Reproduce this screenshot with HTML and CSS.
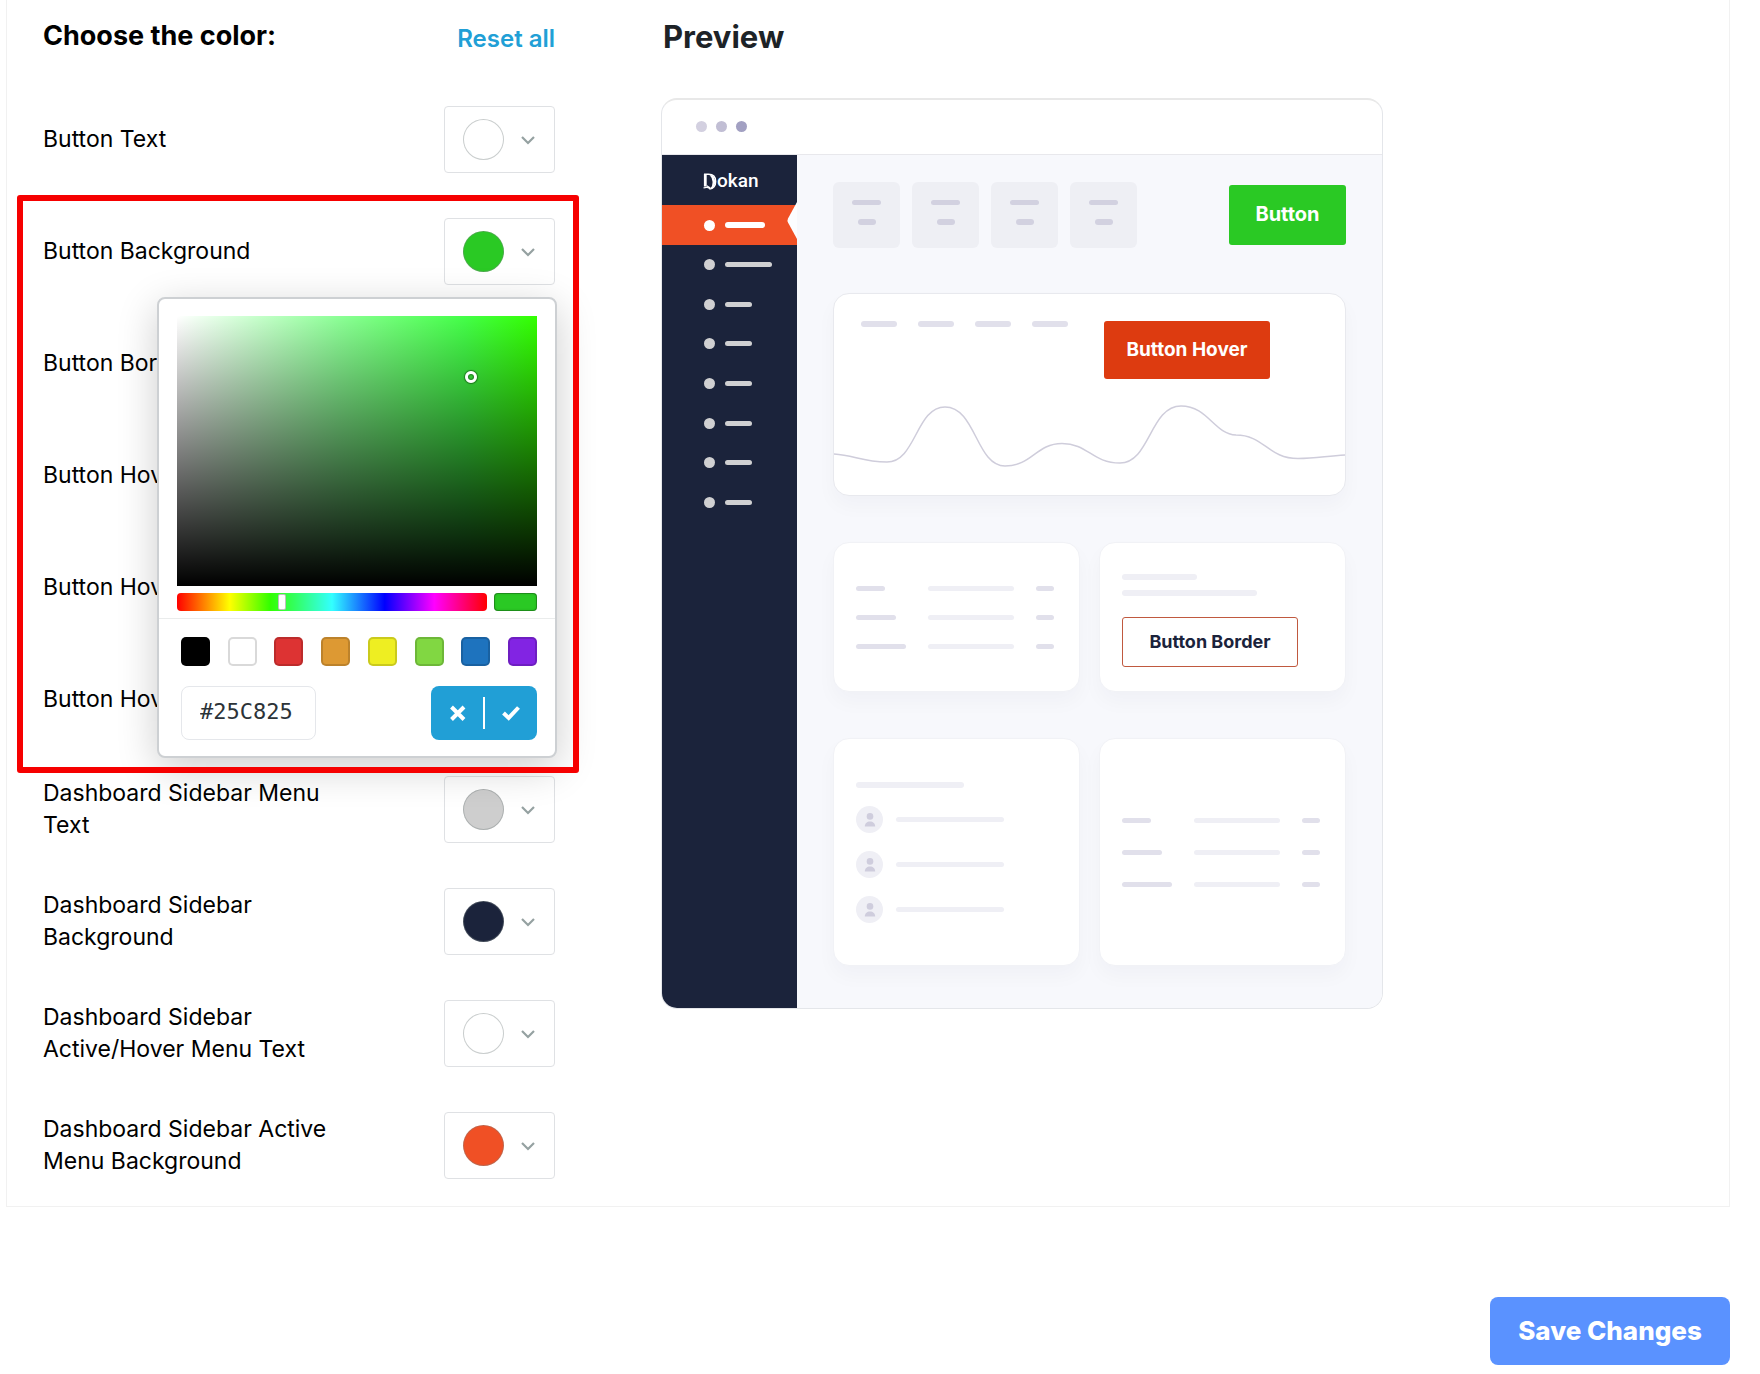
FILE: index.html
```html
<!DOCTYPE html>
<html lang="en">
<head>
<meta charset="utf-8">
<meta name="viewport" content="width=device-width, initial-scale=1">
<title>Color settings</title>
<link rel="stylesheet" href="styles.css">
</head>
<body>
<svg class="defs" width="0" height="0" aria-hidden="true">
  <symbol id="chevron" viewBox="0 0 16 10"><path d="M2 2l6 6 6-6" fill="none" stroke="currentColor" stroke-width="2.2"/></symbol>
  <symbol id="person" viewBox="0 0 12 14"><circle cx="6" cy="3.4" r="3.3"/><path d="M.8 13.6C.8 10.6 3 8.6 6 8.6s5.200 2 5.200 5z"/></symbol>
</svg>
<form class="page">
  <main class="panel">
    <section class="settings">
      <header class="settings-head">
        <h2 class="settings-title">Choose the color:</h2>
        <a class="reset" href="#">Reset all</a>
      </header>

      <div class="groups">
        <div class="group">
          <div class="row">
            <span class="row-label" id="l1">Button Text</span>
            <button type="button" class="chip" aria-labelledby="l1"><span class="dot white"></span><svg class="chevron"><use href="#chevron"/></svg></button>
          </div>
          <div class="row row-open">
            <span class="row-label" id="l2">Button Background</span>
            <button type="button" class="chip" aria-labelledby="l2"><span class="dot green"></span><svg class="chevron"><use href="#chevron"/></svg></button>
            <div class="picker">
              <div class="picker-top">
                <div class="shade"><span class="shade-handle"></span></div>
                <div class="hue-line">
                  <input class="hue" type="range" min="0" max="360" value="120" aria-label="Hue">
                  <span class="current"></span>
                </div>
              </div>
              <div class="picker-bottom">
                <div class="swatches">
                  <button type="button" class="swatch black" aria-label="Black"></button>
                  <button type="button" class="swatch white" aria-label="White"></button>
                  <button type="button" class="swatch red" aria-label="Red"></button>
                  <button type="button" class="swatch amber" aria-label="Orange"></button>
                  <button type="button" class="swatch yellow" aria-label="Yellow"></button>
                  <button type="button" class="swatch lime" aria-label="Lime"></button>
                  <button type="button" class="swatch blue" aria-label="Blue"></button>
                  <button type="button" class="swatch purple" aria-label="Purple"></button>
                </div>
                <div class="picker-foot">
                  <input class="hex" type="text" value="#25C825" aria-label="Hex value">
                  <div class="actions">
                    <button type="button" class="action" aria-label="Cancel"><svg width="20" height="20" viewBox="0 0 20 20"><path d="M4.500 4l12.500 12.500M17 4L4.500 16.500" stroke="#fff" stroke-width="4"/></svg></button>
                    <button type="button" class="action" aria-label="Apply"><svg width="20" height="20" viewBox="0 0 20 20"><path d="M2.500 10l5.200 5L17.500 4.500" fill="none" stroke="#fff" stroke-width="4"/></svg></button>
                  </div>
                </div>
              </div>
            </div>
          </div>
          <div class="row">
            <span class="row-label" id="l3">Button Border</span>
            <button type="button" class="chip" aria-labelledby="l3"><span class="dot orange"></span><svg class="chevron"><use href="#chevron"/></svg></button>
          </div>
          <div class="row">
            <span class="row-label" id="l4">Button Hover</span>
            <button type="button" class="chip" aria-labelledby="l4"><span class="dot orange"></span><svg class="chevron"><use href="#chevron"/></svg></button>
          </div>
          <div class="row">
            <span class="row-label" id="l5">Button Hover Text</span>
            <button type="button" class="chip" aria-labelledby="l5"><span class="dot white"></span><svg class="chevron"><use href="#chevron"/></svg></button>
          </div>
          <div class="row">
            <span class="row-label" id="l6">Button Hover Border</span>
            <button type="button" class="chip" aria-labelledby="l6"><span class="dot orange"></span><svg class="chevron"><use href="#chevron"/></svg></button>
          </div>
        </div>
        <div class="group">
          <div class="row">
            <span class="row-label" id="l7">Dashboard Sidebar Menu Text</span>
            <button type="button" class="chip" aria-labelledby="l7"><span class="dot gray"></span><svg class="chevron"><use href="#chevron"/></svg></button>
          </div>
          <div class="row">
            <span class="row-label" id="l8">Dashboard Sidebar Background</span>
            <button type="button" class="chip" aria-labelledby="l8"><span class="dot navy"></span><svg class="chevron"><use href="#chevron"/></svg></button>
          </div>
          <div class="row">
            <span class="row-label" id="l9">Dashboard Sidebar Active/Hover Menu Text</span>
            <button type="button" class="chip" aria-labelledby="l9"><span class="dot white"></span><svg class="chevron"><use href="#chevron"/></svg></button>
          </div>
          <div class="row">
            <span class="row-label" id="l10">Dashboard Sidebar Active Menu Background</span>
            <button type="button" class="chip" aria-labelledby="l10"><span class="dot orange"></span><svg class="chevron"><use href="#chevron"/></svg></button>
          </div>
        </div>
        <div class="highlight"></div>
      </div>
    </section>

    <section class="preview">
      <h2 class="preview-title">Preview</h2>
      <div class="window">
        <div class="window-bar"><i></i><i></i><i></i></div>
        <div class="window-body">
          <aside class="side">
            <div class="logo">
              <svg width="14" height="17" viewBox="0 0 14 17"><path d="M2.300 1v12.500" stroke="#fff" stroke-width="2.800" fill="none"/><path d="M1 1.300h4.500c4.500 0 7.200 2.600 7.200 7.200 0 4.300-2.400 7.500-6 7.500" stroke="#fff" stroke-width="1.400" fill="none"/><path d="M7.500 2.300c5 1.500 5.500 10.500.5 13.200 3-3 3-10-.5-13.200z" fill="#fff" stroke="#fff" stroke-width="1.200"/><path d="M.5 15c3-1 5-.8 6.500 1M3.800 12.800l3.500 2.200" stroke="#fff" stroke-width="1.300" fill="none"/></svg><span>okan</span>
            </div>
            <div class="menu-item active"><b></b><i></i><svg class="notch" width="10" height="37" viewBox="0 0 10 37"><path d="M10 0v37L1 20.500q-1-2 0-4z" fill="#fcfdff"/></svg></div>
            <div class="menu">
              <div class="menu-item long"><b></b><i></i></div>
              <div class="menu-item"><b></b><i></i></div>
              <div class="menu-item"><b></b><i></i></div>
              <div class="menu-item"><b></b><i></i></div>
              <div class="menu-item"><b></b><i></i></div>
              <div class="menu-item"><b></b><i></i></div>
              <div class="menu-item"><b></b><i></i></div>
            </div>
          </aside>
          <div class="content">
            <div class="stats">
              <div class="tile"><i></i><i></i></div>
              <div class="tile"><i></i><i></i></div>
              <div class="tile"><i></i><i></i></div>
              <div class="tile"><i></i><i></i></div>
              <button type="button" class="demo demo-main">Button</button>
            </div>
            <div class="card chart">
              <div class="chart-head">
                <div class="tabs"><i></i><i></i><i></i><i></i></div>
                <button type="button" class="demo demo-hover">Button Hover</button>
              </div>
              <svg class="curve" viewBox="0 0 511 64" preserveAspectRatio="none"><path d="M0 49C20 50 28 57 53 57C82 57 82 2 111 2C142 2 142 61 171 61C198 61 202 38.500 228 38.500C254 38.500 258 58 286 58C316 58 316 1 347 1C374 1 380 29 402 30C430 30 434 53.500 464 53.500C482 53.500 492 51 511 50" fill="none" stroke="#cfcddb" stroke-width="1.500"/></svg>
            </div>
            <div class="cards">
              <div class="card lines">
                <i></i><i></i><i></i>
                <i class="mid"></i><i></i><i></i>
                <i class="full"></i><i></i><i></i>
              </div>
              <div class="card bordered">
                <i class="bar short"></i>
                <i class="bar long"></i>
                <button type="button" class="demo demo-border">Button Border</button>
              </div>
            </div>
            <div class="cards">
              <div class="card people">
                <i class="bar"></i>
                <div class="person"><span><svg width="12" height="14"><use href="#person"/></svg></span><i></i></div>
                <div class="person"><span><svg width="12" height="14"><use href="#person"/></svg></span><i></i></div>
                <div class="person"><span><svg width="12" height="14"><use href="#person"/></svg></span><i></i></div>
              </div>
              <div class="card lines spaced">
                <i></i><i></i><i></i>
                <i class="mid"></i><i></i><i></i>
                <i class="full"></i><i></i><i></i>
              </div>
            </div>
          </div>
        </div>
      </div>
    </section>
  </main>
  <footer class="foot"><button type="submit" class="save">Save Changes</button></footer>
</form>
</body>
</html>
```
FILE: styles.css
```css
* { box-sizing: border-box; }
body {
  margin: 0;
  background: #fff;
  color: #000;
  font-family: Inter, "Liberation Sans", sans-serif;
}
h2 { margin: 0; }
button, input { font-family: inherit; margin: 0; padding: 0; }
button { cursor: pointer; }
i, b { display: block; }
.defs { position: absolute; }

.page { padding: 0 30px 9px 6px; }
.panel {
  display: grid;
  grid-template-columns: 512px minmax(0, 722px);
  gap: 106px;
  align-items: start;
  padding: 0 0 27px 36px;
  border: 1px solid #f1f1f1;
  border-top: 0;
}

/* Color list */
.settings-head {
  display: flex;
  justify-content: space-between;
  align-items: flex-start;
  height: 106px;
  padding-top: 20px;
}
.settings-title { font-size: 27px; line-height: 32px; font-weight: 700; }
.reset {
  padding-top: 3px;
  font-size: 24px;
  line-height: 32px;
  font-weight: 600;
  color: #219fd6;
  text-decoration: none;
}
.groups { position: relative; display: grid; gap: 43px; }
.group { display: grid; gap: 45px; }
.row {
  display: flex;
  justify-content: space-between;
  align-items: center;
  height: 67px;
}
.row-open { position: relative; z-index: 1; }
.row-label { max-width: 310px; padding-bottom: 1px; font-size: 23px; line-height: 32px; }
.chip {
  display: flex;
  align-items: center;
  gap: 16px;
  width: 111px;
  height: 67px;
  padding-left: 18px;
  background: none;
  border: 1px solid #dfe1e4;
  border-radius: 4px;
}
.chevron { width: 16px; height: 10px; color: #95a1a1; }
.dot {
  width: 41px;
  height: 41px;
  border: 1px solid rgba(120, 130, 130, .4);
  border-radius: 50%;
}
.white { background: #fff; }
.green { background: #2ac924; }
.orange { background: #f05025; }
.gray { background: #cecece; }
.navy { background: #1b233b; }

.highlight {
  position: absolute;
  z-index: 2;
  top: 89px;
  left: -26px;
  right: -24px;
  height: 578px;
  border: 6px solid #f60000;
  border-radius: 3px;
  pointer-events: none;
}

/* Picker */
.picker {
  position: absolute;
  top: 79px;
  right: -2px;
  width: 400px;
  background: #fff;
  border: 2px solid #cdd0d3;
  border-radius: 8px;
  box-shadow: 0 10px 40px rgba(0, 0, 0, .2);
}
.picker-top { padding: 17px 18px 7px; border-bottom: 1px solid #eaecec; }
.shade {
  position: relative;
  height: 270px;
  background:
    linear-gradient(to bottom, rgba(0, 0, 0, 0), #000),
    linear-gradient(to right, #fff, #8cff96 45%, #44ff48 80%, #33ff00);
}
.shade-handle {
  position: absolute;
  top: 55px;
  left: 288px;
  width: 12px;
  height: 12px;
  border: 3px solid #fff;
  border-radius: 50%;
  box-shadow: 0 0 1px 1px rgba(0, 0, 0, .4), inset 0 0 1px 1px rgba(0, 0, 0, .4);
}
.hue-line { display: flex; gap: 7px; margin-top: 7px; }
.hue {
  flex: 1;
  min-width: 0;
  height: 18px;
  appearance: none;
  border-radius: 4px;
  background: linear-gradient(to right, #f00, #ff0 17%, #3f0 30%, #33ff60 38%, #3ff 50%, #00f 67%, #f0f 83%, #f00);
}
.hue::-webkit-slider-thumb {
  appearance: none;
  width: 8px;
  height: 16px;
  background: #fff;
  border: 1px solid rgba(0, 0, 0, .25);
  border-radius: 2px;
}
.current {
  width: 43px;
  height: 18px;
  background: #2ac924;
  border-radius: 4px;
  box-shadow: inset 0 0 0 1px rgba(0, 0, 0, .2), inset 0 0 3px rgba(0, 0, 0, .3);
}
.picker-bottom { padding: 18px 18px 16px 22px; }
.swatches { display: flex; justify-content: space-between; }
.swatch {
  width: 29px;
  height: 29px;
  border: 2px solid rgba(0, 0, 0, .15);
  border-radius: 5px;
}
.black { background: #000; }
.red { background: #dd3333; }
.amber { background: #dd9933; }
.yellow { background: #eeee22; }
.lime { background: #81d742; }
.blue { background: #1e73be; }
.purple { background: #8224e3; }
.picker-foot { display: flex; justify-content: space-between; margin-top: 20px; }
.hex {
  width: 135px;
  height: 54px;
  padding: 0 0 4px 18px;
  border: 1px solid #e5e7eb;
  border-radius: 8px;
  font-family: "DejaVu Sans Mono", monospace;
  font-size: 22px;
  color: #2c3338;
}
.actions {
  display: flex;
  align-items: center;
  width: 106px;
  height: 54px;
  background: #219fd6;
  border-radius: 8px;
}
.action {
  flex: 1;
  display: flex;
  justify-content: center;
  align-items: center;
  height: 32px;
  background: none;
  border: 0;
}
.action + .action { border-left: 2px solid #fff; }

/* Preview */
.preview-title {
  height: 98px;
  padding: 17px 0 0 2px;
  font-size: 31px;
  line-height: 40px;
  font-weight: 700;
  color: #1d2327;
}
.window {
  overflow: hidden;
  border: 1px solid #e4e6ea;
  border-top: 2px solid #e8e8e8;
  border-radius: 16px;
}
.window-bar {
  display: flex;
  align-items: center;
  gap: 9px;
  height: 55px;
  padding: 0 0 2px 34px;
  border-bottom: 1px solid #e8e8ec;
}
.window-bar i { width: 11px; height: 11px; border-radius: 50%; background: #d3d0e0; }
.window-bar i:nth-child(2) { background: #c1bed4; }
.window-bar i:nth-child(3) { background: #a2a0c2; }
.window-body { display: flex; background: #f7f8fc; }
.side { width: 135px; background: #1b233b; }
.logo {
  display: flex;
  align-items: center;
  height: 50px;
  padding: 2px 0 0 41px;
  color: #fff;
  font-family: Roboto, sans-serif;
  font-size: 19px;
  line-height: 22px;
  font-weight: 500;
}
.menu { display: grid; grid-auto-rows: 1fr; height: 277px; }
.menu-item { display: flex; align-items: center; gap: 10px; padding-left: 42px; }
.menu-item b { width: 11px; height: 11px; border-radius: 50%; background: #d0d0d2; }
.menu-item i { width: 27px; height: 5px; border-radius: 3px; background: #d0d0d2; }
.menu-item.long i { width: 47px; }
.menu-item.active { position: relative; height: 40px; background: #f05025; }
.active b, .active i { background: #fff; }
.menu-item.active i { width: 40px; height: 6px; }
.notch { position: absolute; right: 0; top: -3px; }

.content { flex: 1; min-width: 0; padding: 27px 36px 42px; }
.stats { display: flex; align-items: center; gap: 12px; }
.tile {
  display: flex;
  flex-direction: column;
  align-items: center;
  gap: 14px;
  width: 67px;
  height: 66px;
  padding-top: 18px;
  border-radius: 6px;
  background: #eeeff4;
}
.tile i { width: 29px; height: 5px; border-radius: 3px; background: #d2d1e0; }
.tile i + i { width: 18px; height: 6px; }
.demo { border: 0; border-radius: 3px; color: #fff; font-size: 19px; line-height: 24px; font-weight: 700; }
.demo-main { width: 117px; height: 60px; margin-left: auto; padding-bottom: 2px; background: #2ac924; font-size: 20px; }
.card {
  background: #fff;
  border: 1px solid #f1f2f6;
  border-radius: 16px;
  box-shadow: 0 10px 20px rgba(30, 40, 60, .03);
}
.chart { margin-top: 45px; padding-bottom: 26px; border-color: #e8e9ee; }
.chart-head { display: flex; justify-content: space-between; padding: 27px 75px 0 27px; }
.tabs { display: flex; gap: 21px; }
.tabs i { width: 36px; height: 6px; border-radius: 3px; background: #e1e0eb; }
.demo-hover { width: 166px; height: 58px; background: #dd3b10; }
.curve { display: block; width: 100%; height: 64px; margin-top: 26px; }
.cards { display: grid; grid-template-columns: 1fr 1fr; gap: 19px; margin-top: 46px; }
.lines {
  display: grid;
  grid-template-columns: 50px 86px 18px;
  gap: 24px 22px;
  align-content: center;
  height: 150px;
  padding-left: 22px;
}
.lines i { height: 5px; border-radius: 3px; background: #e1e0eb; }
.lines i:nth-child(3n + 1) { width: 29px; }
.lines i:nth-child(3n + 2) { background: #efeff5; }
.lines .mid:nth-child(3n + 1) { width: 40px; }
.lines .full:nth-child(3n + 1) { width: 50px; }
.lines.spaced { height: 228px; row-gap: 27px; }
.bar { height: 6px; border-radius: 3px; background: #efeff5; }
.bordered { padding: 31px 22px 0; }
.bordered .short { width: 75px; }
.bordered .long { width: 135px; margin-top: 10px; }
.demo-border {
  width: 176px;
  height: 50px;
  margin-top: 21px;
  background: #fff;
  border: 1px solid #c0593f;
  color: #1b233b;
  font-size: 18px;
}
.people { padding: 43px 22px 0; }
.people .bar { width: 108px; }
.person { display: flex; align-items: center; gap: 13px; margin-top: 18px; }
.person span {
  display: flex;
  justify-content: center;
  align-items: center;
  width: 27px;
  height: 27px;
  border-radius: 50%;
  background: #efeff5;
  fill: #cfcddd;
}
.person i { width: 108px; height: 5px; border-radius: 3px; background: #efeff5; }

.foot { display: flex; justify-content: flex-end; margin-top: 90px; }
.save {
  width: 240px;
  height: 68px;
  padding-bottom: 2px;
  background: #5a92ff;
  border: 0;
  border-radius: 8px;
  color: #fff;
  font-size: 26px;
  font-weight: 800;
}
```
